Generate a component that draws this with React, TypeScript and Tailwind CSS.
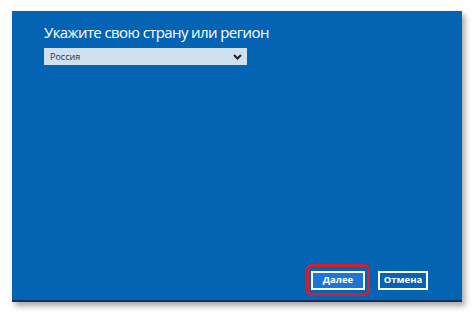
export default function App() {
  return (
    <div className="w-[474px] h-[315px] bg-white pt-[11px] pl-[12px] overflow-hidden">
      <div className="relative w-[450px] h-[291px] bg-[#0563b3] border-b-2 border-[#1c2c52] shadow-[3px_4px_6px_rgba(0,0,0,0.35)] flex flex-col pl-[32px] pr-[34px] pt-[11px] pb-[10px]">
        <h1 className="text-white text-[15px] leading-[20px] font-['Open_Sans',sans-serif] tracking-[-0.6px]">
          Укажите свою страну или регион
        </h1>
        <div className="mt-[6px] w-[203px] h-[17px] bg-[#cfe0ef] flex items-center justify-between pl-[6px] pr-[5px]">
          <span className="text-[9px] text-[#333] font-['Open_Sans',sans-serif]">Россия</span>
          <svg width="9" height="6" viewBox="0 0 9 6">
            <path d="M1 1l3.5 3.5L8 1" stroke="#222" strokeWidth="2" fill="none" />
          </svg>
        </div>
        <div className="mt-auto flex justify-end gap-[13px]">
          <button className="relative w-[54px] h-[19px] bg-[#1b76d6] border-2 border-white text-white text-[9.5px] font-bold font-['Open_Sans',sans-serif] flex items-center justify-center">
            Далее
            <span className="absolute -left-[7px] -right-[7px] -top-[9px] -bottom-[8px] border-[3px] border-[#d1202f] rounded-[6px]" />
          </button>
          <button className="w-[50px] h-[19px] bg-[#0563b3] border-2 border-white text-white text-[9.5px] font-bold font-['Open_Sans',sans-serif] flex items-center justify-center">
            Отмена
          </button>
        </div>
      </div>
    </div>
  );
}
